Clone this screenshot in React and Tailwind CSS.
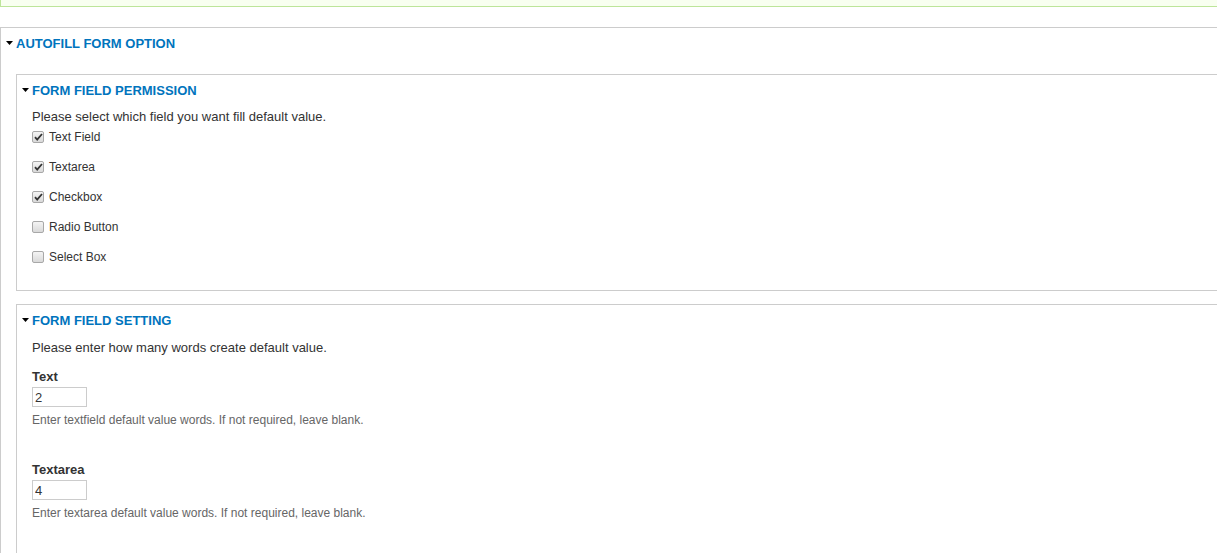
import React from 'react';

const Caret = () => (
  <svg width="7" height="4" viewBox="0 0 7 4" className="shrink-0">
    <path d="M0 0h7L3.5 4z" fill="#000" />
  </svg>
);

const Legend = ({ children }) => (
  <div className="flex items-center h-4 pl-[5px] gap-[3px]">
    <Caret />
    <span className="h-4 leading-[18px] font-bold text-[13px] text-[#0074bd] uppercase">{children}</span>
  </div>
);

const Check = ({ checked, label }) => (
  <label className="flex items-start h-4 gap-[5px]">
    <span className="mt-[2px] w-[12px] h-[12px] rounded-[2px] border border-[#a8a8a8] bg-gradient-to-b from-[#f4f4f4] to-[#d9d9d9] flex items-center justify-center">
      {checked && (
        <svg width="9" height="8" viewBox="0 0 9 8">
          <path d="M1 4.2l2.2 2.4L8 1" fill="none" stroke="#333" strokeWidth="1.8" />
        </svg>
      )}
    </span>
    <span className="h-4 leading-[17px] text-[12px]">{label}</span>
  </label>
);

const NumberField = ({ label, value, help, className = '' }) => (
  <div className={className}>
    <div className="font-bold h-4 leading-[18px]">{label}</div>
    <input
      defaultValue={value}
      className="mt-[3px] block w-[55px] h-[20px] border border-[#ccc] px-[2px] text-[13px] text-[#333] outline-none"
    />
    <div className="mt-[4px] h-4 leading-[18px] text-[12px] text-[#666]">{help}</div>
  </div>
);

const fields = [
  { label: 'Text Field', checked: true },
  { label: 'Textarea', checked: true },
  { label: 'Checkbox', checked: true },
  { label: 'Radio Button', checked: false },
  { label: 'Select Box', checked: false },
];

export default function App() {
  return (
    <div className="h-[553px] overflow-hidden bg-white text-[13px] leading-4 text-[#333] font-['Liberation_Sans',Arial,sans-serif]">
      <div className="h-[7px] bg-[#f8fff0] border-l border-b border-[#bde59a]" />

      <div className="mt-[20px] border-t border-l border-[#ccc] pt-[7px] pb-10">
        <Legend>Autofill form option</Legend>

        <div className="ml-[15px] mt-[23px] border-t border-l border-b border-[#ccc] pt-[7px] pb-[25px]">
          <Legend>Form field permission</Legend>
          <div className="pl-[15px]">
            <p className="mt-[10px] h-4 leading-[18px]">Please select which field you want fill default value.</p>
            <div className="mt-[5px] flex flex-col gap-[14px]">
              {fields.map((f) => (
                <Check key={f.label} label={f.label} checked={f.checked} />
              ))}
            </div>
          </div>
        </div>

        <div className="ml-[15px] mt-[13px] border-t border-l border-[#ccc] pt-[7px] pb-10">
          <Legend>Form field setting</Legend>
          <div className="pl-[15px]">
            <p className="mt-[11px] h-4 leading-[18px]">Please enter how many words create default value.</p>
            <NumberField
              className="mt-[13px]"
              label="Text"
              value="2"
              help="Enter textfield default value words. If not required, leave blank."
            />
            <NumberField
              className="mt-[34px]"
              label="Textarea"
              value="4"
              help="Enter textarea default value words. If not required, leave blank."
            />
          </div>
        </div>
      </div>
    </div>
  );
}
